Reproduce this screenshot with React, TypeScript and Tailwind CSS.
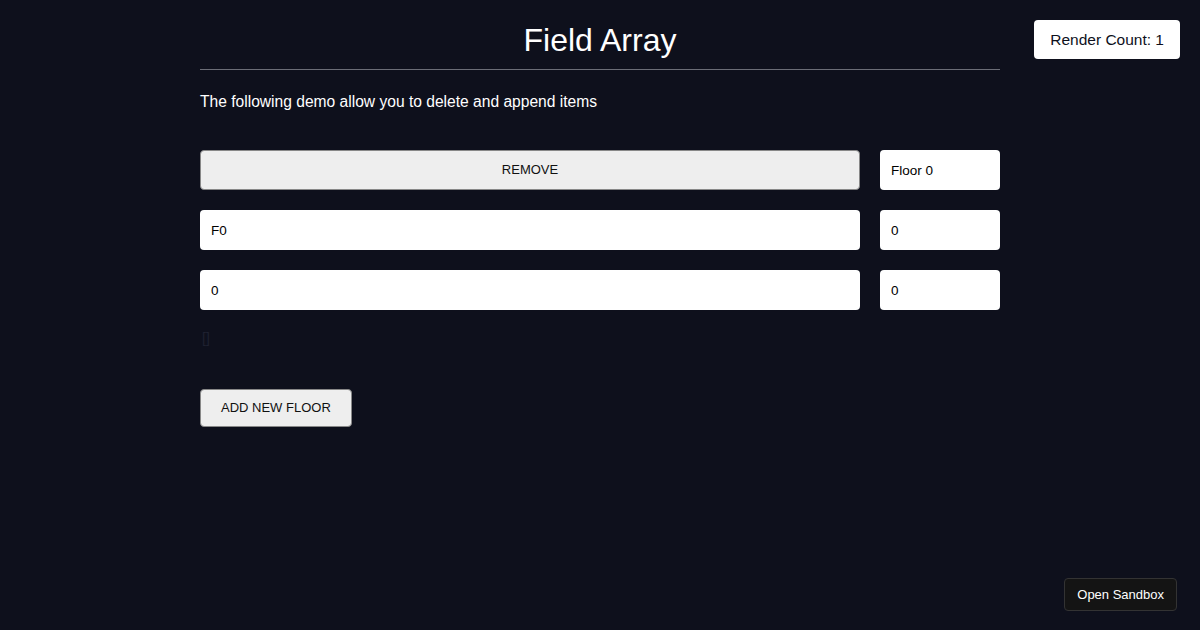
import React from 'react';

export default function App() {
  return (
    <div className="relative w-[1200px] h-[630px] bg-[#0e101c] text-white overflow-hidden" style={{ fontFamily: '"Liberation Sans", Arial, sans-serif' }}>
      <div className="absolute top-5 right-5 bg-white text-[#0e101c] rounded px-4 h-[39px] flex items-center text-[15.5px]">Render Count: 1</div>
      <div className="w-[800px] mx-auto">
        <h1 className="text-[32px] text-center pt-[20px] pb-[9px] leading-[40px]">Field Array</h1>
        <div className="border-b border-[#6b6d76]" />
        <p className="mt-[22px] text-[15.6px] leading-5">The following demo allow you to delete and append items</p>
        <div className="mt-[38px] flex flex-col gap-5">
          <div className="flex gap-5">
            <button className="flex-1 h-[40px] bg-[#eeeeee] text-[#111] text-[13px] border border-[#888] rounded">REMOVE</button>
            <input className="w-[120px] h-[40px] bg-white text-black text-[13.5px] rounded px-[11px]" defaultValue="Floor 0" />
          </div>
          <div className="flex gap-5">
            <input className="flex-1 h-[40px] bg-white text-black text-[13.5px] rounded px-[11px]" defaultValue="F0" />
            <input className="w-[120px] h-[40px] bg-white text-black text-[13.5px] rounded px-[11px]" defaultValue="0" />
          </div>
          <div className="flex gap-5">
            <input className="flex-1 h-[40px] bg-white text-black text-[13.5px] rounded px-[11px]" defaultValue="0" />
            <input className="w-[120px] h-[40px] bg-white text-black text-[13.5px] rounded px-[11px]" defaultValue="0" />
          </div>
        </div>
        <div className="mt-[18px] text-sm text-[#1e2130] h-[20px] pl-[2px]">[]</div>
        <button className="mt-[41px] h-[38px] px-5 bg-[#eeeeee] text-[#111] text-[13px] border border-[#888] rounded">ADD NEW FLOOR</button>
      </div>
      <button className="absolute right-[23px] bottom-[19px] h-[33px] px-3 bg-[#141414] border border-[#333] rounded text-[13px] text-white">Open Sandbox</button>
    </div>
  );
}
